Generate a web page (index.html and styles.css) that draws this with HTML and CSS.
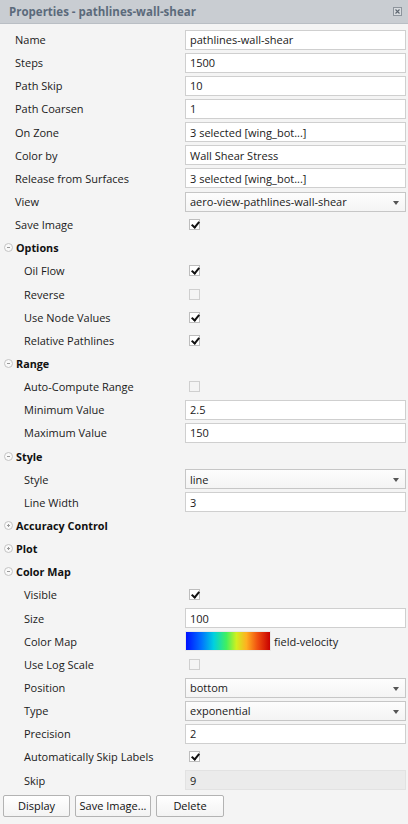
FILE: index.html
```html
<!DOCTYPE html>
<html>
<head>
<meta charset="utf-8">
<link rel="stylesheet" href="styles.css">
</head>
<body>
<div class="panel">
  <div class="header">
    <span class="title">Properties - pathlines-wall-shear</span>
    <svg class="close" width="9" height="9" viewBox="0 0 9 9"><rect x="0.5" y="0.5" width="8" height="8" fill="#d8dbdf" stroke="#8d949c"/><path d="M2.5 2.5 L6.5 6.5 M6.5 2.5 L2.5 6.5" stroke="#5d6670" stroke-width="1.1"/></svg>
  </div>
  <div class="rows">
    <div class="row"><span class="lbl">Name</span><div class="inp">pathlines-wall-shear</div></div>
    <div class="row"><span class="lbl">Steps</span><div class="inp">1500</div></div>
    <div class="row"><span class="lbl">Path Skip</span><div class="inp">10</div></div>
    <div class="row"><span class="lbl">Path Coarsen</span><div class="inp">1</div></div>
    <div class="row"><span class="lbl">On Zone</span><div class="inp">3 selected [wing_bot...]</div></div>
    <div class="row"><span class="lbl">Color by</span><div class="inp">Wall Shear Stress</div></div>
    <div class="row"><span class="lbl">Release from Surfaces</span><div class="inp">3 selected [wing_bot...]</div></div>
    <div class="row"><span class="lbl">View</span><div class="inp sel">aero-view-pathlines-wall-shear<span class="arrow"></span></div></div>
    <div class="row"><span class="lbl">Save Image</span><span class="cb on"></span></div>
    <div class="row sec"><span class="tog minus"></span><span class="stitle">Options</span></div>
    <div class="row sub"><span class="lbl">Oil Flow</span><span class="cb on"></span></div>
    <div class="row sub"><span class="lbl">Reverse</span><span class="cb dis"></span></div>
    <div class="row sub"><span class="lbl">Use Node Values</span><span class="cb on"></span></div>
    <div class="row sub"><span class="lbl">Relative Pathlines</span><span class="cb on"></span></div>
    <div class="row sec"><span class="tog minus"></span><span class="stitle">Range</span></div>
    <div class="row sub"><span class="lbl">Auto-Compute Range</span><span class="cb dis"></span></div>
    <div class="row sub"><span class="lbl">Minimum Value</span><div class="inp">2.5</div></div>
    <div class="row sub"><span class="lbl">Maximum Value</span><div class="inp">150</div></div>
    <div class="row sec"><span class="tog minus"></span><span class="stitle">Style</span></div>
    <div class="row sub"><span class="lbl">Style</span><div class="inp sel">line<span class="arrow"></span></div></div>
    <div class="row sub"><span class="lbl">Line Width</span><div class="inp">3</div></div>
    <div class="row sec"><span class="tog plus"></span><span class="stitle">Accuracy Control</span></div>
    <div class="row sec"><span class="tog plus"></span><span class="stitle">Plot</span></div>
    <div class="row sec"><span class="tog minus"></span><span class="stitle">Color Map</span></div>
    <div class="row sub"><span class="lbl">Visible</span><span class="cb on"></span></div>
    <div class="row sub"><span class="lbl">Size</span><div class="inp">100</div></div>
    <div class="row sub"><span class="lbl">Color Map</span><div class="cmap"><span class="grad"></span><span class="cmname">field-velocity</span></div></div>
    <div class="row sub"><span class="lbl">Use Log Scale</span><span class="cb dis"></span></div>
    <div class="row sub"><span class="lbl">Position</span><div class="inp sel">bottom<span class="arrow"></span></div></div>
    <div class="row sub"><span class="lbl">Type</span><div class="inp sel">exponential<span class="arrow"></span></div></div>
    <div class="row sub"><span class="lbl">Precision</span><div class="inp">2</div></div>
    <div class="row sub"><span class="lbl">Automatically Skip Labels</span><span class="cb on"></span></div>
    <div class="row sub"><span class="lbl">Skip</span><div class="inp ro">9</div></div>
  </div>
  <div class="buttons">
    <button class="btn b1">Display</button>
    <button class="btn b2">Save Image...</button>
    <button class="btn b3">Delete</button>
  </div>
</div>
</body>
</html>
```
FILE: styles.css
```css
html, body {
  margin: 0;
  padding: 0;
  background: #f4f4f4;
}
body {
  font-family: "Open Sans", "DejaVu Sans", sans-serif;
  font-size: 11px;
  color: #1a1a1a;
}
.panel {
  width: 408px;
  height: 824px;
  display: flex;
  flex-direction: column;
  background: #f4f4f4;
}
.header {
  height: 24px;
  background: #c9cdd2;
  border-bottom: 1px solid #b9bec4;
  display: flex;
  align-items: center;
  justify-content: space-between;
  padding: 0 6px 0 9px;
  box-sizing: border-box;
}
.title {
  font-weight: bold;
  color: #5b6a7b;
  font-size: 11.5px;
}
.close { display: block; }
.rows {
  padding-top: 4px;
  display: flex;
  flex-direction: column;
}
.row {
  height: 23.15px;
  display: flex;
  align-items: center;
  padding-left: 15px;
  box-sizing: border-box;
}
.row.sub { padding-left: 24px; }
.row.sec { padding-left: 4px; }
.lbl {
  width: 170px;
  flex: none;
  white-space: nowrap;
}
.row.sub .lbl { width: 161px; }
.inp {
  width: 221px;
  height: 20px;
  box-sizing: border-box;
  background: #fff;
  border: 1px solid #cfcfcf;
  padding-left: 4px;
  display: flex;
  align-items: center;
  position: relative;
  white-space: nowrap;
}
.inp.sel {
  background: linear-gradient(#fdfdfd, #f4f4f4);
  border-color: #c6c6c6;
}
.inp.ro {
  background: #ebebeb;
  border-color: #e2e2e2;
}
.arrow {
  position: absolute;
  right: 6px;
  top: 8px;
  width: 0;
  height: 0;
  border-left: 3.5px solid transparent;
  border-right: 3.5px solid transparent;
  border-top: 4px solid #555;
}
.cb {
  width: 11px;
  height: 11px;
  box-sizing: border-box;
  margin-left: 4px;
  border: 1px solid #bdbdbd;
  background: #fff;
  position: relative;
}
.cb.dis {
  background: #f4f4f4;
  border-color: #cfcfcf;
}
.cb.on::after {
  content: "";
  position: absolute;
  left: 3px;
  top: 0px;
  width: 3px;
  height: 6px;
  border: solid #111;
  border-width: 0 2px 2px 0;
  transform: rotate(40deg);
}
.tog {
  width: 7px;
  height: 7px;
  border-radius: 50%;
  border: 1px solid #c4c4c4;
  background: #f9f9f9;
  position: relative;
  margin-right: 3px;
  flex: none;
}
.tog::before {
  content: "";
  position: absolute;
  left: 2px;
  top: 3px;
  width: 3px;
  height: 1px;
  background: #999;
}
.tog.plus::after {
  content: "";
  position: absolute;
  left: 3px;
  top: 2px;
  width: 1px;
  height: 3px;
  background: #999;
}
.stitle {
  font-weight: bold;
  color: #111;
  font-size: 10.8px;
}
.cmap {
  display: flex;
  align-items: center;
}
.grad {
  width: 86px;
  height: 20px;
  box-sizing: border-box;
  border: 1px solid #e8e8e8;
  background: linear-gradient(to right, #0010ff 0%, #0070ff 18%, #00d0e0 33%, #40f060 48%, #d0f020 60%, #ffb020 72%, #f05010 85%, #c80000 100%);
}
.cmname {
  margin-left: 3px;
}
.buttons {
  display: flex;
  padding: 3px 0 0 3px;
}
.btn {
  font-family: inherit;
  font-size: 11px;
  color: #111;
  height: 22px;
  white-space: nowrap;
  background: linear-gradient(#ffffff, #f3f3f3);
  border: 1px solid #b3b3b3;
  border-radius: 2px;
  padding: 0;
  margin-right: 5px;
}
.b1 { width: 67px; }
.b2 { width: 76px; }
.b3 { width: 68px; }
```
